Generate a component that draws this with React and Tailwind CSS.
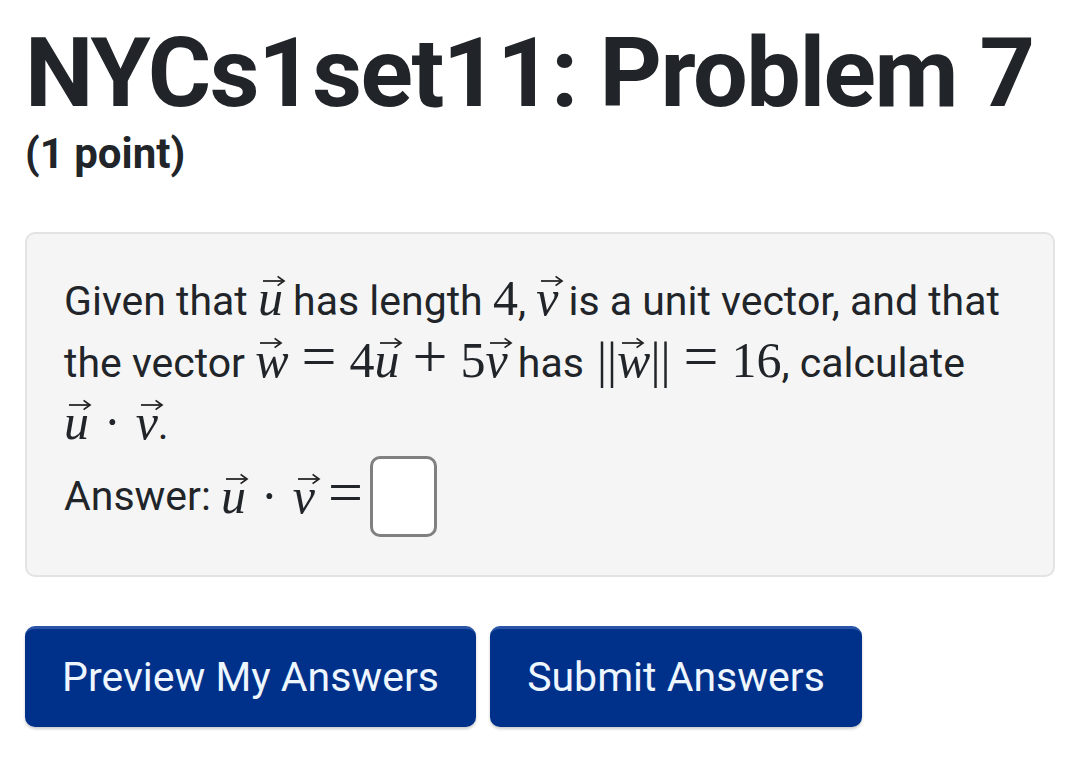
import React from "react";

const Vec = ({ ch }) => (
  <span className="relative inline-block">
    <span className="italic">{ch}</span>
    <svg
      className="absolute left-[0.06em] top-[0.02em] w-[0.5em] h-[0.28em]"
      viewBox="0 0 20 12"
      fill="none"
    >
      <path d="M1 6H18.5" stroke="#222" strokeWidth="1.5" />
      <path d="M13.5 2L19 6L13.5 10" stroke="#222" strokeWidth="1.5" />
    </svg>
  </span>
);

const M = ({ children }) => (
  <span className="font-['Liberation_Serif',serif] text-[50px] leading-none">{children}</span>
);

const Op = ({ children }) => (
  <span className="mx-[13px] text-[62px] leading-[0] not-italic">{children}</span>
);
const Dot = () => <span className="mx-[0.3em] not-italic">·</span>;

export default function App() {
  return (
    <div className="min-h-[763px] bg-white pl-[25px] pr-[15px] font-['Roboto',sans-serif] text-[#212529]">
      <h1 className="whitespace-nowrap pt-[15px] text-[97px] font-bold leading-[1.2] tracking-[-1.5px]">
        NYCs1set11: Problem 7
      </h1>
      <div className="mt-[-2px] text-[42px] font-bold leading-[1.2]">(1 point)</div>

      <div className="mt-[52px] w-[1030px] rounded-[10px] border-2 border-[#e3e3e3] bg-[#f5f5f5] px-[37px] pt-[36px] pb-[38px] text-[41px] leading-[62px]">
        <p>
          Given that <M><Vec ch="u" /></M> has length <M>4</M>, <M><Vec ch="v" /></M> is a unit vector, and that
          <br />
          the vector <M><Vec ch="w" /><Op>=</Op>4<Vec ch="u" /><Op>+</Op>5<Vec ch="v" /></M> has{" "}
          <M>
            <span className="ml-[3px]">||</span><Vec ch="w" />||<Op>=</Op>16
          </M>
          , calculate
          <br />
          <M>
            <Vec ch="u" /><Dot /><Vec ch="v" />
          </M>
          .
        </p>
        <p className="mt-0 flex items-center">
          <span>Answer:&nbsp;</span>
          <M>
            <Vec ch="u" /><Dot /><Vec ch="v" /><Op>=</Op>
          </M>
          <span className="-ml-[6px] inline-block h-[81px] w-[67px] rounded-[10px] border-[3px] border-[#808080] bg-white"></span>
        </p>
      </div>

      <div className="mt-[49px] flex gap-[14px]">
        <button className="h-[101px] w-[451px] rounded-[10px] border-t-[3px] border-[#2a55a6] bg-[#00318a] text-[41px] text-[#eef6ff] shadow-[0_2px_3px_rgba(0,0,0,0.2)]">
          Preview My Answers
        </button>
        <button className="h-[101px] w-[372px] rounded-[10px] border-t-[3px] border-[#2a55a6] bg-[#00318a] text-[41px] text-[#eef6ff] shadow-[0_2px_3px_rgba(0,0,0,0.2)]">
          Submit Answers
        </button>
      </div>
    </div>
  );
}
